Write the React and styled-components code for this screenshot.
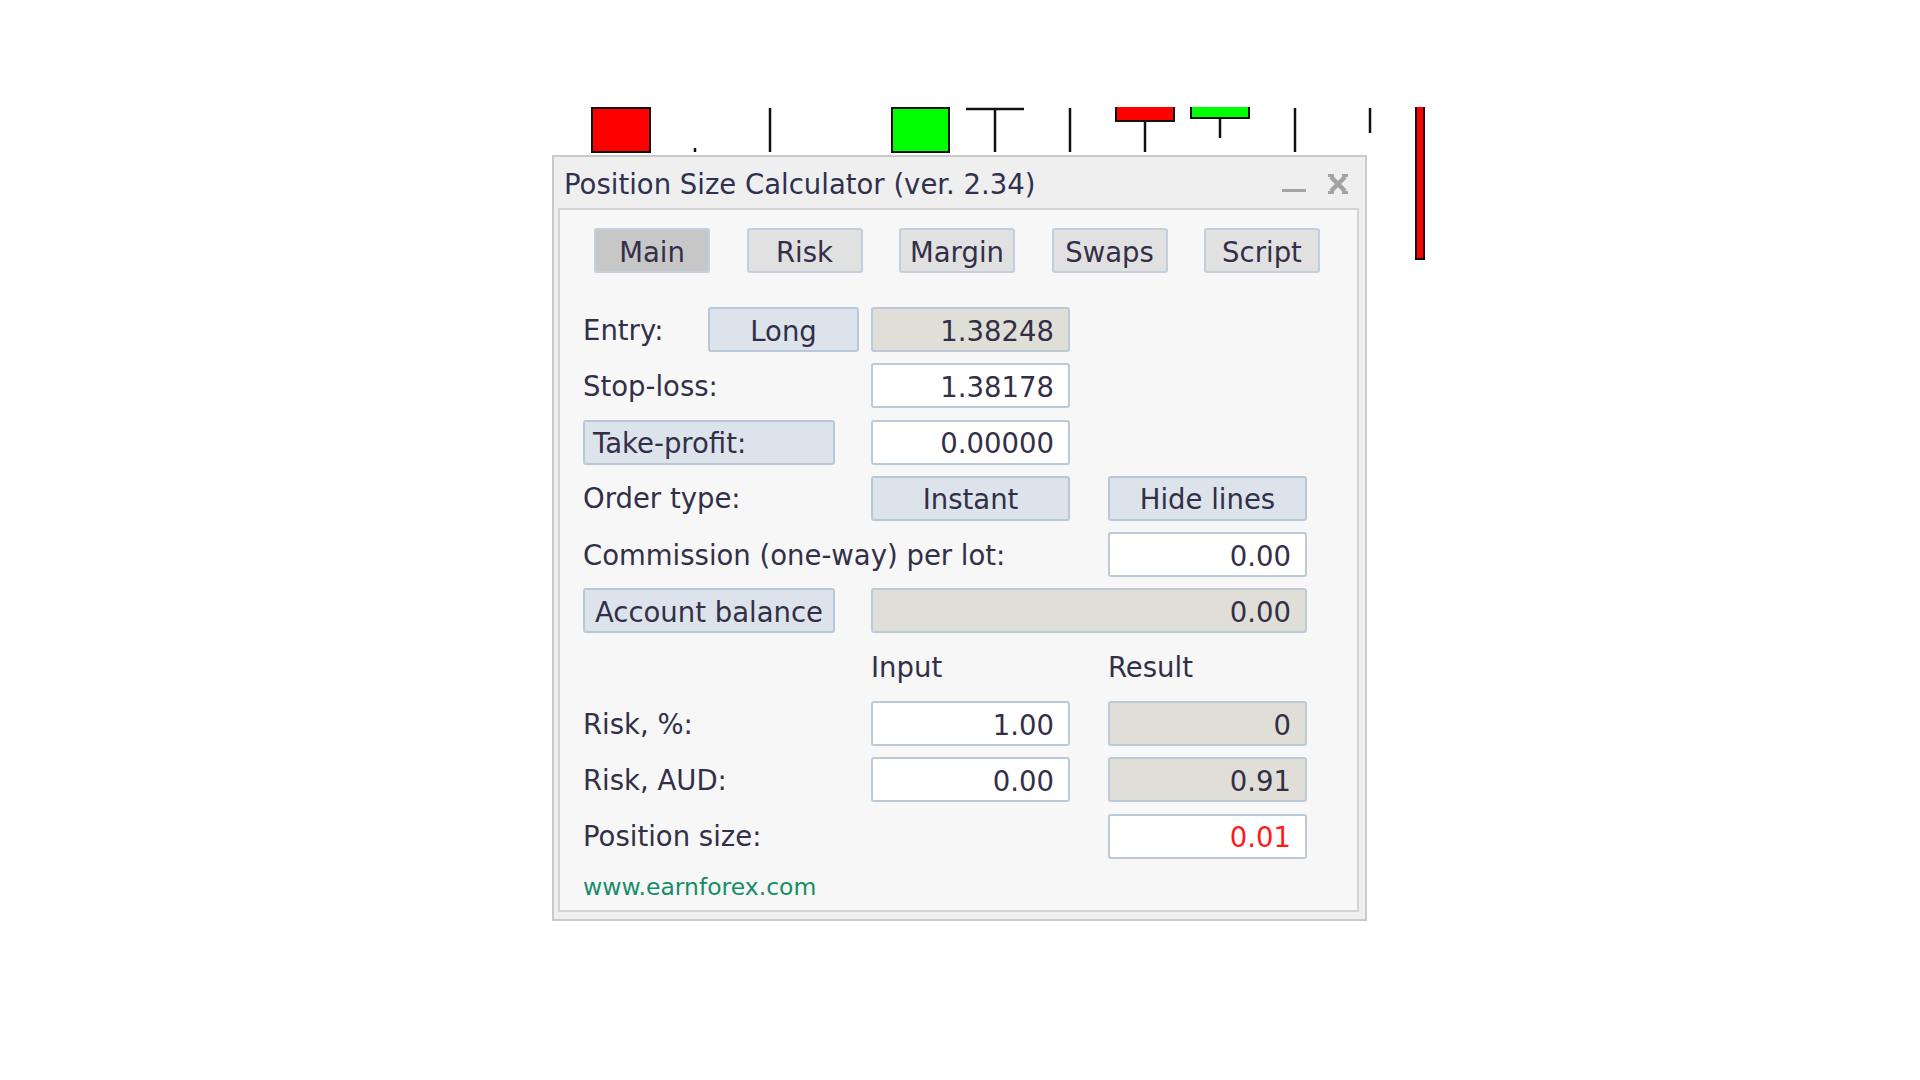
import React from "react"
import styled, { createGlobalStyle } from "styled-components"

const GlobalStyle = createGlobalStyle`
  html, body {
    margin: 0;
    padding: 0;
    background: #fff;
  }
  body {
    font-family: "DejaVu Sans", Verdana, sans-serif;
  }
`

// candles of the chart behind the panel (page coordinates)
const candles = [
  { type: "body", x: 592, w: 58, y1: 108, y2: 152, fill: "#ff0000" },
  { type: "wick", x: 695, y1: 148, y2: 152 },
  { type: "wick", x: 770, y1: 108, y2: 152 },
  { type: "body", x: 892, w: 57, y1: 108, y2: 152, fill: "#00ff00" },
  { type: "wick", x: 966, w: 58, y1: 109, y2: 109 },
  { type: "wick", x: 995, y1: 108, y2: 152 },
  { type: "wick", x: 1070, y1: 108, y2: 152 },
  { type: "body", x: 1116, w: 58, y1: 106, y2: 121, fill: "#ff0000" },
  { type: "wick", x: 1145, y1: 121, y2: 152 },
  { type: "body", x: 1191, w: 58, y1: 106, y2: 118, fill: "#00ff00" },
  { type: "wick", x: 1220, y1: 118, y2: 138 },
  { type: "wick", x: 1295, y1: 108, y2: 152 },
  { type: "wick", x: 1370, y1: 108, y2: 133 },
  { type: "body", x: 1416, w: 8, y1: 106, y2: 259, fill: "#ff0000" },
]

const Chart = () => (
  <ChartSvg width="1920" height="1080" viewBox="0 0 1920 1080">
    {candles.map((c, i) =>
      c.type === "body" ? (
        <rect
          key={i}
          x={c.x}
          y={c.y1}
          width={c.w}
          height={c.y2 - c.y1}
          fill={c.fill}
          stroke="#111"
          strokeWidth="2"
        />
      ) : c.w ? (
        <line key={i} x1={c.x} x2={c.x + c.w} y1={c.y1} y2={c.y2} stroke="#111" strokeWidth="2.5" />
      ) : (
        <line key={i} x1={c.x} x2={c.x} y1={c.y1} y2={c.y2} stroke="#111" strokeWidth="2.5" />
      )
    )}
    <rect x="0" y="0" width="1920" height="107" fill="#fff" />
  </ChartSvg>
)

const tabs = ["Main", "Risk", "Margin", "Swaps", "Script"]

const App = () => {
  return (
    <Stage>
      <GlobalStyle />
      <Chart />
      <Window>
        <TitleBar>
          <Title>Position Size Calculator (ver. 2.34)</Title>
          <WinControls>
            <svg width="26" height="6" viewBox="0 0 26 6">
              <rect x="1" y="1" width="24" height="3" fill="#a4a4a4" />
            </svg>
            <svg width="22" height="22" viewBox="0 0 22 22">
              <path d="M4 4 L18 18 M18 4 L4 18" stroke="#a2a2a2" strokeWidth="4.5" />
              <path d="M1 2.5 H7 M15 2.5 H21 M1 19.5 H7 M15 19.5 H21" stroke="#a2a2a2" strokeWidth="3" />
            </svg>
          </WinControls>
        </TitleBar>
        <Body>
          <TabRow>
            {tabs.map((t) => (
              <Tab key={t} $active={t === "Main"}>
                {t}
              </Tab>
            ))}
          </TabRow>
          <Form>
            <Label $col="1 / 2">Entry:</Label>
            <Button $col="2 / 3">Long</Button>
            <Field $col="4 / 5" $readOnly>1.38248</Field>

            <Label $col="1 / 4">Stop-loss:</Label>
            <Field $col="4 / 5">1.38178</Field>

            <Button $col="1 / 3" $wide $left>Take-profit:</Button>
            <Field $col="4 / 5">0.00000</Field>

            <Label $col="1 / 4">Order type:</Label>
            <Button $col="4 / 5">Instant</Button>
            <Button $col="6 / 7">Hide lines</Button>

            <Label $col="1 / 6">Commission (one-way) per lot:</Label>
            <Field $col="6 / 7">0.00</Field>

            <Button $col="1 / 3" $wide>Account balance</Button>
            <Field $col="4 / 7" $readOnly>0.00</Field>

            <Label $col="4 / 5">Input</Label>
            <Label $col="6 / 7">Result</Label>

            <Label $col="1 / 4">Risk, %:</Label>
            <Field $col="4 / 5">1.00</Field>
            <Field $col="6 / 7" $readOnly>0</Field>

            <Label $col="1 / 4">Risk, AUD:</Label>
            <Field $col="4 / 5">0.00</Field>
            <Field $col="6 / 7" $readOnly>0.91</Field>

            <Label $col="1 / 4">Position size:</Label>
            <Field $col="6 / 7" $alert>0.01</Field>
          </Form>
          <Link>www.earnforex.com</Link>
        </Body>
      </Window>
    </Stage>
  )
}

export default App

const Stage = styled.div`
  position: relative;
  width: 1920px;
  height: 1080px;
  overflow: hidden;
  background: #fff;
`

const ChartSvg = styled.svg`
  position: absolute;
  left: 0;
  top: 0;
`

const Window = styled.div`
  position: absolute;
  left: 552px;
  top: 155px;
  width: 815px;
  height: 766px;
  box-sizing: border-box;
  border: 2px solid #cacaca;
  background: #efefef;
  padding: 0 6px 7px 4px;
  display: flex;
  flex-direction: column;
`

const TitleBar = styled.div`
  height: 51px;
  display: flex;
  align-items: center;
  padding-left: 6px;
  padding-right: 10px;
  padding-top: 2px;
  box-sizing: border-box;
`

const Title = styled.div`
  flex: 1;
  font-size: 27.5px;
  color: #2f3150;
  white-space: nowrap;
`

const WinControls = styled.div`
  display: flex;
  align-items: center;
  gap: 20px;
  svg:first-child {
    margin-top: 14px;
  }
`

const Body = styled.div`
  flex: 1;
  border: 2px solid #d3d3d3;
  background: #f7f7f7;
  display: flex;
  flex-direction: column;
`

const TabRow = styled.div`
  display: flex;
  gap: 36.5px;
  margin-top: 18px;
  padding-left: 34px;
`

const Tab = styled.div`
  width: 116px;
  height: 45px;
  box-sizing: border-box;
  border: 2px solid #c3cfdc;
  border-radius: 3px;
  background: ${(p) => (p.$active ? "#c7c7c7" : "#e1e1e1")};
  color: #332f48;
  font-size: 27.5px;
  display: flex;
  align-items: center;
  justify-content: center;
  padding-top: 2px;
`

const Form = styled.div`
  display: grid;
  grid-template-columns: 125px 151px 12px 199px 38px 199px;
  grid-auto-rows: 45px;
  row-gap: 11.3px;
  margin-top: 34px;
  padding-left: 23px;
`

const Label = styled.div`
  grid-column: ${(p) => p.$col};
  display: flex;
  align-items: center;
  font-size: 27.5px;
  color: #332f48;
  white-space: nowrap;
`

const Button = styled.div`
  grid-column: ${(p) => p.$col};
  ${(p) => p.$wide && "width: 252px;"}
  box-sizing: border-box;
  border: 2px solid #b9c8d8;
  border-radius: 3px;
  background: #dce3eb;
  color: #332f48;
  font-size: 27.5px;
  display: flex;
  align-items: center;
  justify-content: ${(p) => (p.$left ? "flex-start" : "center")};
  padding-left: ${(p) => (p.$left ? "8px" : "0")};
  padding-top: 2px;
  white-space: nowrap;
`

const Field = styled.div`
  grid-column: ${(p) => p.$col};
  box-sizing: border-box;
  border: 2px solid #bccad8;
  border-radius: 3px;
  background: ${(p) => (p.$readOnly ? "#dfdfd7" : "#ffffff")};
  color: ${(p) => (p.$alert ? "#ff1a1a" : "#332f48")};
  font-size: 27.5px;
  display: flex;
  align-items: center;
  justify-content: flex-end;
  padding-right: 14px;
  padding-top: 2px;
`

const Link = styled.div`
  margin-top: 14px;
  padding-left: 23px;
  font-size: 23.5px;
  line-height: 28px;
  color: #178c68;
`
